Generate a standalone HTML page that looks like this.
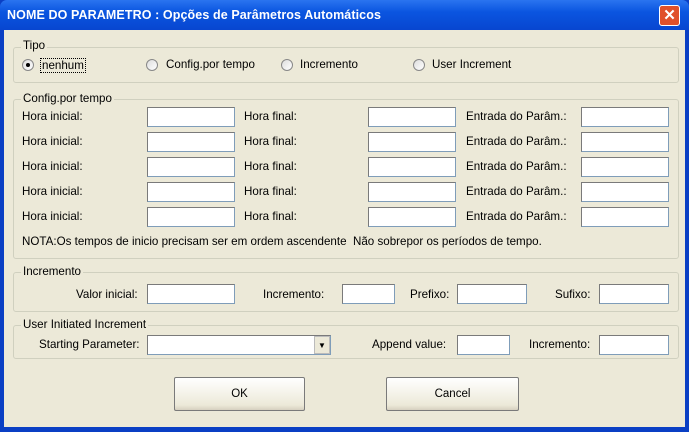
<!DOCTYPE html>
<html><head><style>
*{box-sizing:border-box;margin:0;padding:0}
body{width:689px;height:432px;overflow:hidden;background:#0a3fc4;font-family:"Liberation Sans",sans-serif;font-size:11.6px;color:#000;position:relative}
.title{position:absolute;left:0;top:0;width:689px;height:30px;background:linear-gradient(#2a74f0,#0a55e0 40%,#0846d0);border-radius:7px 7px 0 0}
.title span{position:absolute;left:7px;top:8px;color:#fff;font-weight:bold;font-size:12.5px;letter-spacing:0.1px}
.x{position:absolute;left:659px;top:5px;width:21px;height:21px;background:#e0502a;border:1px solid #fff;border-radius:3px;color:#fff;font-size:15px;font-weight:bold;text-align:center;line-height:19px}
.body{position:absolute;left:4px;top:30px;width:681px;height:397px;background:#ece9d8}
.a{position:absolute;white-space:nowrap}
.g{position:absolute;border:1px solid #d0d0bf;border-radius:3px}
.gl{position:absolute;background:#ece9d8;padding:0 2px;white-space:nowrap}
.in{position:absolute;height:20px;background:#fff;border:1px solid #7f9db9;border-top-color:#7a7a7a;border-left-color:#7a7a7a}
.r{position:absolute;width:12px;height:12px;border-radius:50%;border:1px solid #888;background:linear-gradient(135deg,#ddd,#fff)}
.btn{position:absolute;height:34px;border:1px solid #7a7a7a;border-radius:2px;background:linear-gradient(#fff,#ece9d8 85%,#d6d0c0);text-align:center;line-height:32px;font-size:11.5px}
</style></head><body>
<div class="title"><span>NOME DO PARAMETRO : Opções de Parâmetros Automáticos</span><div class="x">✕</div></div>
<div class="body"></div>

<div class="g" style="left:13px;top:47px;width:666px;height:36px"></div>
<div class="gl a" style="left:21px;top:39px">Tipo</div>
<div class="r" style="left:22px;top:59px"><div style="position:absolute;left:3px;top:3px;width:4px;height:4px;border-radius:50%;background:#000"></div></div>
<div class="a" style="left:40px;top:58px;border:1px dotted #000;padding:0 1px">nenhum</div>
<div class="r" style="left:146px;top:59px"></div><div class="a" style="left:166px;top:58px">Config.por tempo</div>
<div class="r" style="left:281px;top:59px"></div><div class="a" style="left:300px;top:58px">Incremento</div>
<div class="r" style="left:413px;top:59px"></div><div class="a" style="left:432px;top:58px">User Increment</div>

<div class="g" style="left:13px;top:99px;width:666px;height:160px"></div>
<div class="gl a" style="left:21px;top:92px">Config.por tempo</div>

<div class="a" style="left:22px;top:110px">Hora inicial:</div><div class="in" style="left:147px;top:107px;width:88px"></div><div class="a" style="left:244px;top:110px">Hora final:</div><div class="in" style="left:368px;top:107px;width:88px"></div><div class="a" style="left:466px;top:110px">Entrada do Parâm.:</div><div class="in" style="left:581px;top:107px;width:88px"></div>
<div class="a" style="left:22px;top:135px">Hora inicial:</div><div class="in" style="left:147px;top:132px;width:88px"></div><div class="a" style="left:244px;top:135px">Hora final:</div><div class="in" style="left:368px;top:132px;width:88px"></div><div class="a" style="left:466px;top:135px">Entrada do Parâm.:</div><div class="in" style="left:581px;top:132px;width:88px"></div>
<div class="a" style="left:22px;top:160px">Hora inicial:</div><div class="in" style="left:147px;top:157px;width:88px"></div><div class="a" style="left:244px;top:160px">Hora final:</div><div class="in" style="left:368px;top:157px;width:88px"></div><div class="a" style="left:466px;top:160px">Entrada do Parâm.:</div><div class="in" style="left:581px;top:157px;width:88px"></div>
<div class="a" style="left:22px;top:185px">Hora inicial:</div><div class="in" style="left:147px;top:182px;width:88px"></div><div class="a" style="left:244px;top:185px">Hora final:</div><div class="in" style="left:368px;top:182px;width:88px"></div><div class="a" style="left:466px;top:185px">Entrada do Parâm.:</div><div class="in" style="left:581px;top:182px;width:88px"></div>
<div class="a" style="left:22px;top:210px">Hora inicial:</div><div class="in" style="left:147px;top:207px;width:88px"></div><div class="a" style="left:244px;top:210px">Hora final:</div><div class="in" style="left:368px;top:207px;width:88px"></div><div class="a" style="left:466px;top:210px">Entrada do Parâm.:</div><div class="in" style="left:581px;top:207px;width:88px"></div>
<div class="a" style="left:22px;top:235px">NOTA:Os tempos de inicio precisam ser em ordem ascendente &nbsp;Não sobrepor os períodos de tempo.</div>

<div class="g" style="left:13px;top:272px;width:666px;height:40px"></div>
<div class="gl a" style="left:21px;top:265px">Incremento</div>
<div class="a" style="left:76px;top:288px">Valor inicial:</div><div class="in" style="left:147px;top:284px;width:88px"></div>
<div class="a" style="left:263px;top:288px">Incremento:</div><div class="in" style="left:342px;top:284px;width:53px"></div>
<div class="a" style="left:410px;top:288px">Prefixo:</div><div class="in" style="left:457px;top:284px;width:70px"></div>
<div class="a" style="left:555px;top:288px">Sufixo:</div><div class="in" style="left:599px;top:284px;width:70px"></div>

<div class="g" style="left:13px;top:325px;width:666px;height:34px"></div>
<div class="gl a" style="left:21px;top:318px">User Initiated Increment</div>
<div class="a" style="left:39px;top:338px">Starting Parameter:</div>
<div class="in" style="left:147px;top:335px;width:184px"><div style="position:absolute;right:0;top:0;width:16px;height:18px;background:#ece9d8;border:1px solid #bbb;font-size:8px;text-align:center;line-height:17px">▼</div></div>
<div class="a" style="left:372px;top:338px">Append value:</div><div class="in" style="left:457px;top:335px;width:53px"></div>
<div class="a" style="left:529px;top:338px">Incremento:</div><div class="in" style="left:599px;top:335px;width:70px"></div>

<div class="btn" style="left:174px;top:377px;width:131px">OK</div>
<div class="btn" style="left:386px;top:377px;width:133px">Cancel</div>
</body></html>
